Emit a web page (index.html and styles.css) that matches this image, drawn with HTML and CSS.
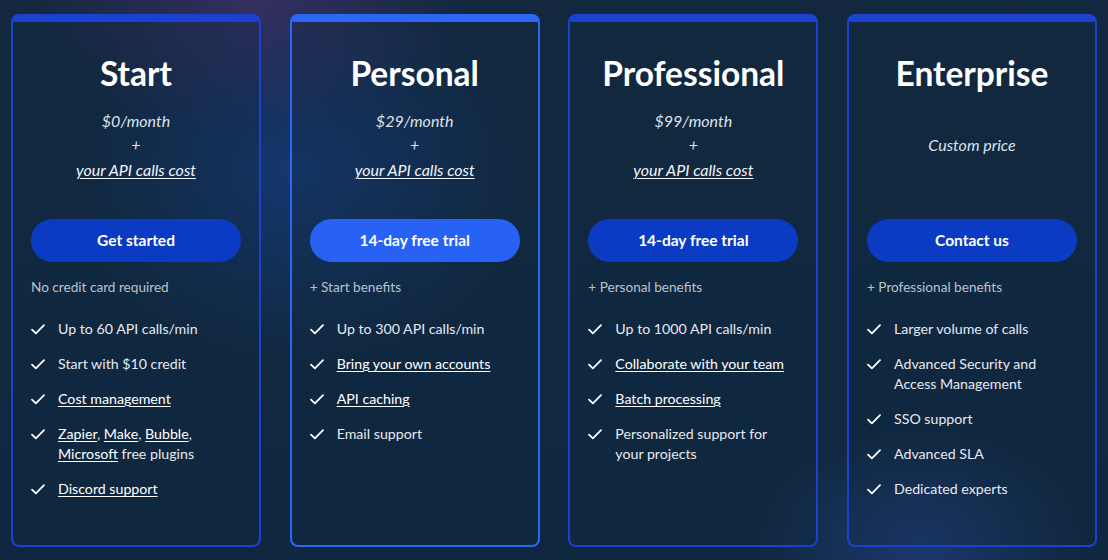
FILE: index.html
```html
<!DOCTYPE html>
<html lang="en">
<head>
<meta charset="utf-8">
<title>Pricing</title>
<link rel="stylesheet" href="styles.css">
</head>
<body>
<main class="plans">
  <section class="card">
    <h2 class="title">Start</h2>
    <div class="price">
      <span>$0/month</span>
      <span>+</span>
      <a href="#" class="link">your API calls cost</a>
    </div>
    <a href="#" class="btn">Get started</a>
    <p class="note">No credit card required</p>
    <ul class="features">
      <li><svg class="check" viewBox="0 0 14 11"><path d="M1 5.6 L4.9 9.4 L13 1.2"/></svg><span>Up to 60 API calls/min</span></li>
      <li><svg class="check" viewBox="0 0 14 11"><path d="M1 5.6 L4.9 9.4 L13 1.2"/></svg><span>Start with $10 credit</span></li>
      <li><svg class="check" viewBox="0 0 14 11"><path d="M1 5.6 L4.9 9.4 L13 1.2"/></svg><span><a href="#" class="link">Cost management</a></span></li>
      <li><svg class="check" viewBox="0 0 14 11"><path d="M1 5.6 L4.9 9.4 L13 1.2"/></svg><span><a href="#" class="link">Zapier</a>, <a href="#" class="link">Make</a>, <a href="#" class="link">Bubble</a>, <a href="#" class="link">Microsoft</a> free plugins</span></li>
      <li><svg class="check" viewBox="0 0 14 11"><path d="M1 5.6 L4.9 9.4 L13 1.2"/></svg><span><a href="#" class="link">Discord support</a></span></li>
    </ul>
  </section>
  <section class="card card-featured">
    <h2 class="title">Personal</h2>
    <div class="price">
      <span>$29/month</span>
      <span>+</span>
      <a href="#" class="link">your API calls cost</a>
    </div>
    <a href="#" class="btn btn-bright">14-day free trial</a>
    <p class="note">+ Start benefits</p>
    <ul class="features">
      <li><svg class="check" viewBox="0 0 14 11"><path d="M1 5.6 L4.9 9.4 L13 1.2"/></svg><span>Up to 300 API calls/min</span></li>
      <li><svg class="check" viewBox="0 0 14 11"><path d="M1 5.6 L4.9 9.4 L13 1.2"/></svg><span><a href="#" class="link">Bring your own accounts</a></span></li>
      <li><svg class="check" viewBox="0 0 14 11"><path d="M1 5.6 L4.9 9.4 L13 1.2"/></svg><span><a href="#" class="link">API caching</a></span></li>
      <li><svg class="check" viewBox="0 0 14 11"><path d="M1 5.6 L4.9 9.4 L13 1.2"/></svg><span>Email support</span></li>
    </ul>
  </section>
  <section class="card">
    <h2 class="title">Professional</h2>
    <div class="price">
      <span>$99/month</span>
      <span>+</span>
      <a href="#" class="link">your API calls cost</a>
    </div>
    <a href="#" class="btn">14-day free trial</a>
    <p class="note">+ Personal benefits</p>
    <ul class="features">
      <li><svg class="check" viewBox="0 0 14 11"><path d="M1 5.6 L4.9 9.4 L13 1.2"/></svg><span>Up to 1000 API calls/min</span></li>
      <li><svg class="check" viewBox="0 0 14 11"><path d="M1 5.6 L4.9 9.4 L13 1.2"/></svg><span><a href="#" class="link">Collaborate with your team</a></span></li>
      <li><svg class="check" viewBox="0 0 14 11"><path d="M1 5.6 L4.9 9.4 L13 1.2"/></svg><span><a href="#" class="link">Batch processing</a></span></li>
      <li><svg class="check" viewBox="0 0 14 11"><path d="M1 5.6 L4.9 9.4 L13 1.2"/></svg><span>Personalized support for your projects</span></li>
    </ul>
  </section>
  <section class="card">
    <h2 class="title">Enterprise</h2>
    <div class="price">
      <span>Custom price</span>
    </div>
    <a href="#" class="btn">Contact us</a>
    <p class="note">+ Professional benefits</p>
    <ul class="features">
      <li><svg class="check" viewBox="0 0 14 11"><path d="M1 5.6 L4.9 9.4 L13 1.2"/></svg><span>Larger volume of calls</span></li>
      <li><svg class="check" viewBox="0 0 14 11"><path d="M1 5.6 L4.9 9.4 L13 1.2"/></svg><span>Advanced Security and Access Management</span></li>
      <li><svg class="check" viewBox="0 0 14 11"><path d="M1 5.6 L4.9 9.4 L13 1.2"/></svg><span>SSO support</span></li>
      <li><svg class="check" viewBox="0 0 14 11"><path d="M1 5.6 L4.9 9.4 L13 1.2"/></svg><span>Advanced SLA</span></li>
      <li><svg class="check" viewBox="0 0 14 11"><path d="M1 5.6 L4.9 9.4 L13 1.2"/></svg><span>Dedicated experts</span></li>
    </ul>
  </section>
</main>
</body>
</html>
```

FILE: styles.css
```css
* { box-sizing: border-box; }

html, body {
  margin: 0;
  height: 560px;
  overflow: hidden;
}

body {
  font-family: Lato, "Open Sans", sans-serif;
  color: #ffffff;
  background-color: #10283f;
  background-image:
    radial-gradient(ellipse 220px 130px at 250px 0px, rgba(75, 50, 115, 0.6), rgba(75, 50, 115, 0) 100%),
    radial-gradient(ellipse 230px 190px at 300px 170px, rgba(25, 75, 170, 0.45), rgba(25, 75, 170, 0) 100%),
    radial-gradient(ellipse 160px 110px at 920px 540px, rgba(40, 70, 150, 0.55), rgba(40, 70, 150, 0) 100%),
    linear-gradient(180deg, #13283f 0%, #10283f 100%);
}

.plans {
  display: grid;
  grid-template-columns: repeat(4, 1fr);
  column-gap: 28.67px;
  padding: 14px 11px 0;
}

.card {
  height: 533px;
  border: 2px solid #1a42d2;
  border-top-width: 8px;
  border-radius: 8px;
  padding: 0 18px;
  display: flex;
  flex-direction: column;
  background: rgba(16, 38, 62, 0.25);
}

.card-featured {
  border-color: #2c66f5;
}

.title {
  margin: 31px 0 0;
  font-size: 33.5px;
  line-height: 40px;
  font-weight: 700;
  text-align: center;
  color: #ffffff;
}

.price {
  margin-top: 15px;
  height: 75px;
  display: flex;
  flex-direction: column;
  justify-content: center;
  align-items: center;
  font-style: italic;
  font-size: 16px;
  line-height: 24.5px;
  color: #dde2ea;
}

.link {
  color: #ffffff;
  text-decoration: underline;
  text-underline-offset: 2px;
  text-decoration-thickness: 1px;
}

.price .link {
  color: #f2f4f8;
}

.btn {
  margin-top: 36px;
  height: 43px;
  border-radius: 22px;
  background: #0a3bc2;
  color: #ffffff;
  font-weight: 700;
  font-size: 15.5px;
  display: flex;
  align-items: center;
  justify-content: center;
  text-decoration: none;
  padding-bottom: 2px;
}

.btn-bright {
  background: #2762f5;
}

.note {
  margin: 15px 0 0;
  font-size: 13.6px;
  line-height: 20px;
  color: #b9c3ce;
}

.features {
  list-style: none;
  margin: 22px 0 0;
  padding: 0 8px 0 0;
  display: flex;
  flex-direction: column;
  gap: 15px;
}

.features li {
  display: flex;
  align-items: flex-start;
  font-size: 14.2px;
  line-height: 20px;
  color: #e6e9ef;
}

.check {
  flex: none;
  width: 14px;
  height: 11px;
  margin: 5px 13px 0 0;
  fill: none;
  stroke: #ffffff;
  stroke-width: 1.8;
  stroke-linecap: round;
  stroke-linejoin: round;
}

.features .link {
  color: #ffffff;
}
```
